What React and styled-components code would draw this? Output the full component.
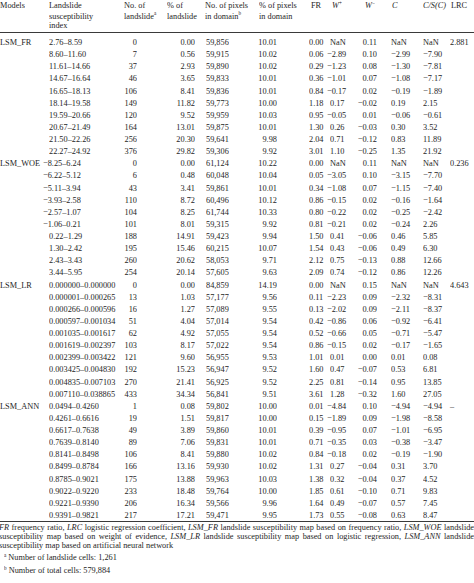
import React from 'react'
import styled, { createGlobalStyle } from 'styled-components'

const GlobalStyle = createGlobalStyle`
  html, body {
    margin: 0;
    padding: 0;
    background: #fff;
  }
  body {
    font-family: 'Liberation Serif', 'Times New Roman', serif;
    color: #1e1e1e;
  }
`

const TRACKS = '49px 73px 43px 38px 54px 50px 18px 30px 34px 32px 28px 40px'

const STRETCH = 'transform: scaleY(1.09);'

const Figure = styled.figure`
  margin: 0;
  width: 474px;
  height: 583px;
  overflow: hidden;
  font-size: 8.3px;
`

const Head = styled.div`
  display: grid;
  grid-template-columns: ${TRACKS};
  width: 489px;
  height: 32px;
  border-bottom: 1px solid #3a3a3a;
`

const HeadCell = styled.div`
  padding-left: ${p => p.$inset}px;
  line-height: 9.5px;
  white-space: nowrap;
  transform-origin: 0 0;
  ${STRETCH}
`

const Body = styled.div`
  display: grid;
  grid-template-columns: ${TRACKS};
  grid-auto-rows: 12.13px;
  width: 489px;
  padding-top: 3px;
  border-bottom: 1px solid #3a3a3a;
`

const Cell = styled.div`
  display: flex;
  align-items: center;
  justify-content: ${p => (p.$end ? 'flex-end' : 'flex-start')};
  padding-left: ${p => (p.$end ? 0 : p.$inset)}px;
  padding-right: ${p => (p.$end ? p.$inset : 0)}px;
  white-space: nowrap;
  ${STRETCH}
`

const Minus = styled.span`
  margin-left: -${p => p.$hang}px;
`

const Sup = styled.sup`
  font-size: 0.62em;
  line-height: 0;
  vertical-align: 0.55em;
`

const Var = styled.i``

const Notes = styled.div`
  width: 475px;
  margin-left: -1px;
  padding-top: 1px;
  line-height: 9px;
`

const NoteLine = styled.div`
  text-align: justify;
  text-align-last: ${p => (p.$fill ? 'justify' : 'left')};
  white-space: nowrap;
  ${STRETCH}
`

const Footnote = styled.div`
  margin-top: ${p => p.$gap}px;
  padding-left: 4px;
  line-height: 9px;
  ${STRETCH}
`

// column setup: header lines, header inset, value inset, alignment, hanging minus
const COLS = [
  { head: ['Models'], hi: 0, vi: 0 },
  { head: ['Landslide', 'susceptibility', 'index'], hi: 0, vi: 0, hang: 6 },
  { head: ['No. of', <>landslide<Sup>a</Sup></>], hi: 2, vi: 28, end: true },
  { head: ['% of', 'landslide'], hi: 2, vi: 8, end: true },
  { head: ['No. of pixels', <>in domain<Sup>b</Sup></>], hi: 2, vi: 3 },
  { head: ['% of pixels', 'in domain'], hi: 2, vi: 30, end: true },
  { head: ['FR'], hi: 4, vi: 2 },
  { head: [<><Var>W</Var><Sup>+</Sup></>], hi: 7, vi: 5, hang: 3 },
  { head: [<><Var>W</Var><Sup>−</Sup></>], hi: 10, vi: 12, end: true },
  { head: [<Var>C</Var>], hi: 3, vi: 2 },
  { head: [<Var>C/S(C)</Var>], hi: 2, vi: 2 },
  { head: ['LRC'], hi: 2, vi: 1 },
]

const SECTIONS = [
  {
    model: 'LSM_FR',
    lrc: '2.881',
    rows: [
      '2.76–8.59 0 0.00 59,856 10.01 0.00 NaN 0.11 NaN NaN',
      '8.60–11.60 7 0.56 59,915 10.02 0.06 −2.89 0.10 −2.99 −7.90',
      '11.61–14.66 37 2.93 59,890 10.02 0.29 −1.23 0.08 −1.30 −7.81',
      '14.67–16.64 46 3.65 59,833 10.01 0.36 −1.01 0.07 −1.08 −7.17',
      '16.65–18.13 106 8.41 59,836 10.01 0.84 −0.17 0.02 −0.19 −1.89',
      '18.14–19.58 149 11.82 59,773 10.00 1.18 0.17 −0.02 0.19 2.15',
      '19.59–20.66 120 9.52 59,959 10.03 0.95 −0.05 0.01 −0.06 −0.61',
      '20.67–21.49 164 13.01 59,875 10.01 1.30 0.26 −0.03 0.30 3.52',
      '21.50–22.26 256 20.30 59,641 9.98 2.04 0.71 −0.12 0.83 11.89',
      '22.27–24.92 376 29.82 59,306 9.92 3.01 1.10 −0.25 1.35 21.92',
    ],
  },
  {
    model: 'LSM_WOE',
    lrc: '0.236',
    rows: [
      '−8.25–6.24 0 0.00 61,124 10.22 0.00 NaN 0.11 NaN NaN',
      '−6.22–5.12 6 0.48 60,048 10.04 0.05 −3.05 0.10 −3.15 −7.70',
      '−5.11–3.94 43 3.41 59,861 10.01 0.34 −1.08 0.07 −1.15 −7.40',
      '−3.93–2.58 110 8.72 60,496 10.12 0.86 −0.15 0.02 −0.16 −1.64',
      '−2.57–1.07 104 8.25 61,744 10.33 0.80 −0.22 0.02 −0.25 −2.42',
      '−1.06–0.21 101 8.01 59,315 9.92 0.81 −0.21 0.02 −0.24 2.26',
      '0.22–1.29 188 14.91 59,423 9.94 1.50 0.41 −0.06 0.46 5.85',
      '1.30–2.42 195 15.46 60,215 10.07 1.54 0.43 −0.06 0.49 6.30',
      '2.43–3.43 260 20.62 58,053 9.71 2.12 0.75 −0.13 0.88 12.66',
      '3.44–5.95 254 20.14 57,605 9.63 2.09 0.74 −0.12 0.86 12.26',
    ],
  },
  {
    model: 'LSM_LR',
    lrc: '4.643',
    rows: [
      '0.000000–0.000000 0 0.00 84,859 14.19 0.00 NaN 0.15 NaN NaN',
      '0.000001–0.000265 13 1.03 57,177 9.56 0.11 −2.23 0.09 −2.32 −8.31',
      '0.000266–0.000596 16 1.27 57,089 9.55 0.13 −2.02 0.09 −2.11 −8.37',
      '0.000597–0.001034 51 4.04 57,014 9.54 0.42 −0.86 0.06 −0.92 −6.41',
      '0.001035–0.001617 62 4.92 57,055 9.54 0.52 −0.66 0.05 −0.71 −5.47',
      '0.001619–0.002397 103 8.17 57,022 9.54 0.86 −0.15 0.02 −0.17 −1.65',
      '0.002399–0.003422 121 9.60 56,955 9.53 1.01 0.01 0.00 0.01 0.08',
      '0.003425–0.004830 192 15.23 56,947 9.52 1.60 0.47 −0.07 0.53 6.81',
      '0.004835–0.007103 270 21.41 56,925 9.52 2.25 0.81 −0.14 0.95 13.85',
      '0.007110–0.038865 433 34.34 56,841 9.51 3.61 1.28 −0.32 1.60 27.05',
    ],
  },
  {
    model: 'LSM_ANN',
    lrc: '–',
    rows: [
      '0.0494–0.4260 1 0.08 59,802 10.00 0.01 −4.84 0.10 −4.94 −4.94',
      '0.4261–0.6616 19 1.51 59,817 10.00 0.15 −1.89 0.09 −1.98 −8.58',
      '0.6617–0.7638 49 3.89 59,860 10.01 0.39 −0.95 0.07 −1.01 −6.95',
      '0.7639–0.8140 89 7.06 59,831 10.01 0.71 −0.35 0.03 −0.38 −3.47',
      '0.8141–0.8498 106 8.41 59,880 10.02 0.84 −0.18 0.02 −0.19 −1.90',
      '0.8499–0.8784 166 13.16 59,930 10.02 1.31 0.27 −0.04 0.31 3.70',
      '0.8785–0.9021 175 13.88 59,963 10.03 1.38 0.32 −0.04 0.37 4.52',
      '0.9022–0.9220 233 18.48 59,764 10.00 1.85 0.61 −0.10 0.71 9.83',
      '0.9221–0.9390 206 16.34 59,566 9.96 1.64 0.49 −0.07 0.57 7.45',
      '0.9391–0.9821 217 17.21 59,471 9.95 1.73 0.55 −0.08 0.63 8.47',
    ],
  },
]

const Value = ({ text, hang }) => {
  if (hang && text.startsWith('−')) {
    return <><Minus $hang={hang}>−</Minus>{text.slice(1)}</>
  }
  return text
}

const App = () => {
  const rows = SECTIONS.flatMap(sec =>
    sec.rows.map((line, i) => [i === 0 ? sec.model : '', ...line.split(' '), i === 0 ? sec.lrc : ''])
  )

  return (
    <>
      <GlobalStyle />
      <Figure>
        <Head>
          {COLS.map((col, c) => (
            <HeadCell key={c} $inset={col.hi}>
              {col.head.map((part, k) => <div key={k}>{part}</div>)}
            </HeadCell>
          ))}
        </Head>
        <Body>
          {rows.map((row, r) =>
            row.map((val, c) => (
              <Cell key={`${r}-${c}`} $end={COLS[c].end} $inset={COLS[c].vi}>
                <Value text={val} hang={COLS[c].hang} />
              </Cell>
            ))
          )}
        </Body>
        <Notes>
          <NoteLine $fill>
            <Var>FR</Var> frequency ratio, <Var>LRC</Var> logistic regression coefficient, <Var>LSM_FR</Var> landslide susceptibility map based on frequency ratio, <Var>LSM_WOE</Var> landslide
          </NoteLine>
          <NoteLine $fill>
            susceptibility map based on weight of evidence, <Var>LSM_LR</Var> landslide susceptibility map based on logistic regression, <Var>LSM_ANN</Var> landslide
          </NoteLine>
          <NoteLine>susceptibility map based on artificial neural network</NoteLine>
        </Notes>
        <Footnote $gap={3}><Sup>a</Sup> Number of landslide cells: 1,261</Footnote>
        <Footnote $gap={4}><Sup>b</Sup> Number of total cells: 579,884</Footnote>
      </Figure>
    </>
  )
}

export default App
